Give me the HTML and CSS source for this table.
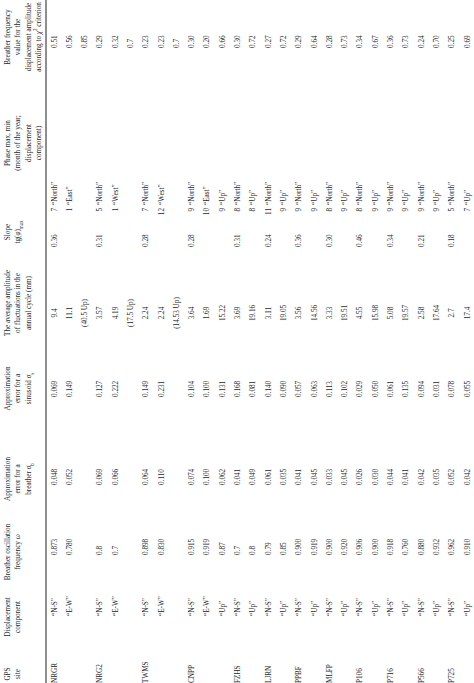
FILE: index.html
```html
<!DOCTYPE html>
<html lang="en">
<head>
<meta charset="utf-8">
<title>Breather table</title>
<link rel="stylesheet" href="styles.css">
</head>
<body>
<div class="sheet">
  <div class="head">
    <div><span>GPS<br>site</span></div>
    <div><span>Displacement<br>component</span></div>
    <div><span>Breather oscillation<br>frequency <i>ω</i></span></div>
    <div><span>Approximation<br>error for a<br>breather <i>σ</i><sub>b</sub></span></div>
    <div><span>Approximation<br>error for a<br>sinusoid <i>σ</i><sub>s</sub></span></div>
    <div><span>The average amplitude<br>of fluctuations in the<br>annual cycle (mm)</span></div>
    <div><span>Slope<br>tg(<i>φ</i>)<sub>max</sub></span></div>
    <div><span>Phase max, min<br>(month of the year;<br>displacement<br>component)</span></div>
    <div><span>Breather frequency<br>value for the<br>displacement amplitude<br>according to <i>χ</i><sup>2</sup> criterion</span></div>
  </div>
  <div class="rule"></div>
  <div class="body">
    <div class="row"><span class="c1">NRGR</span><span class="c2">“N-S”</span><span class="c3">0.873</span><span class="c4">0.048</span><span class="c5">0.069</span><span class="c6">9.4</span><span class="c7">0.36</span><span class="c8"><span class="n">7</span>“North”</span><span class="c9">0.51</span></div>
    <div class="row"><span class="c1"></span><span class="c2">“E-W”</span><span class="c3">0.780</span><span class="c4">0.052</span><span class="c5">0.149</span><span class="c6">11.1</span><span class="c7"></span><span class="c8"><span class="n">1</span>“East”</span><span class="c9">0.56</span></div>
    <div class="row"><span class="c1"></span><span class="c2"></span><span class="c3"></span><span class="c4"></span><span class="c5"></span><span class="c6">(40.5 Up)</span><span class="c7"></span><span class="c8"></span><span class="c9">0.85</span></div>
    <div class="row"><span class="c1">NRG2</span><span class="c2">“N-S”</span><span class="c3">0.8</span><span class="c4">0.069</span><span class="c5">0.127</span><span class="c6">3.57</span><span class="c7">0.31</span><span class="c8"><span class="n">5</span>“North”</span><span class="c9">0.29</span></div>
    <div class="row"><span class="c1"></span><span class="c2">“E-W”</span><span class="c3">0.7</span><span class="c4">0.066</span><span class="c5">0.222</span><span class="c6">4.19</span><span class="c7"></span><span class="c8"><span class="n">1</span>“West”</span><span class="c9">0.32</span></div>
    <div class="row"><span class="c1"></span><span class="c2"></span><span class="c3"></span><span class="c4"></span><span class="c5"></span><span class="c6">(17.5 Up)</span><span class="c7"></span><span class="c8"></span><span class="c9">0.7</span></div>
    <div class="row"><span class="c1">TWMS</span><span class="c2">“N-S”</span><span class="c3">0.898</span><span class="c4">0.064</span><span class="c5">0.149</span><span class="c6">2.24</span><span class="c7">0.28</span><span class="c8"><span class="n">7</span>“North”</span><span class="c9">0.23</span></div>
    <div class="row"><span class="c1"></span><span class="c2">“E-W”</span><span class="c3">0.830</span><span class="c4">0.110</span><span class="c5">0.231</span><span class="c6">2.24</span><span class="c7"></span><span class="c8"><span class="n">12</span>“West”</span><span class="c9">0.23</span></div>
    <div class="row"><span class="c1"></span><span class="c2"></span><span class="c3"></span><span class="c4"></span><span class="c5"></span><span class="c6">(14.53 Up)</span><span class="c7"></span><span class="c8"></span><span class="c9">0.7</span></div>
    <div class="row"><span class="c1">CNPP</span><span class="c2">“N-S”</span><span class="c3">0.915</span><span class="c4">0.074</span><span class="c5">0.104</span><span class="c6">3.64</span><span class="c7">0.28</span><span class="c8"><span class="n">9</span>“North”</span><span class="c9">0.30</span></div>
    <div class="row"><span class="c1"></span><span class="c2">“E-W”</span><span class="c3">0.919</span><span class="c4">0.100</span><span class="c5">0.100</span><span class="c6">1.69</span><span class="c7"></span><span class="c8"><span class="n">10</span>“East”</span><span class="c9">0.20</span></div>
    <div class="row"><span class="c1"></span><span class="c2">“Up”</span><span class="c3">0.87</span><span class="c4">0.062</span><span class="c5">0.131</span><span class="c6">15.22</span><span class="c7"></span><span class="c8"><span class="n">9</span>“Up”</span><span class="c9">0.66</span></div>
    <div class="row"><span class="c1">FZHS</span><span class="c2">“N-S”</span><span class="c3">0.7</span><span class="c4">0.041</span><span class="c5">0.168</span><span class="c6">3.69</span><span class="c7">0.31</span><span class="c8"><span class="n">8</span>“North”</span><span class="c9">0.30</span></div>
    <div class="row"><span class="c1"></span><span class="c2">“Up”</span><span class="c3">0.8</span><span class="c4">0.049</span><span class="c5">0.081</span><span class="c6">19.16</span><span class="c7"></span><span class="c8"><span class="n">8</span>“Up”</span><span class="c9">0.72</span></div>
    <div class="row"><span class="c1">LJRN</span><span class="c2">“N-S”</span><span class="c3">0.79</span><span class="c4">0.061</span><span class="c5">0.140</span><span class="c6">3.11</span><span class="c7">0.24</span><span class="c8"><span class="n">11</span>“North”</span><span class="c9">0.27</span></div>
    <div class="row"><span class="c1"></span><span class="c2">“Up”</span><span class="c3">0.85</span><span class="c4">0.035</span><span class="c5">0.090</span><span class="c6">19.05</span><span class="c7"></span><span class="c8"><span class="n">9</span>“Up”</span><span class="c9">0.72</span></div>
    <div class="row"><span class="c1">PPBF</span><span class="c2">“N-S”</span><span class="c3">0.900</span><span class="c4">0.041</span><span class="c5">0.057</span><span class="c6">3.56</span><span class="c7">0.36</span><span class="c8"><span class="n">9</span>“North”</span><span class="c9">0.29</span></div>
    <div class="row"><span class="c1"></span><span class="c2">“Up”</span><span class="c3">0.919</span><span class="c4">0.045</span><span class="c5">0.063</span><span class="c6">14.56</span><span class="c7"></span><span class="c8"><span class="n">9</span>“Up”</span><span class="c9">0.64</span></div>
    <div class="row"><span class="c1">MLFP</span><span class="c2">“N-S”</span><span class="c3">0.900</span><span class="c4">0.033</span><span class="c5">0.113</span><span class="c6">3.33</span><span class="c7">0.30</span><span class="c8"><span class="n">8</span>“North”</span><span class="c9">0.28</span></div>
    <div class="row"><span class="c1"></span><span class="c2">“Up”</span><span class="c3">0.920</span><span class="c4">0.045</span><span class="c5">0.102</span><span class="c6">19.51</span><span class="c7"></span><span class="c8"><span class="n">9</span>“Up”</span><span class="c9">0.73</span></div>
    <div class="row"><span class="c1">P106</span><span class="c2">“N-S”</span><span class="c3">0.906</span><span class="c4">0.026</span><span class="c5">0.029</span><span class="c6">4.55</span><span class="c7">0.46</span><span class="c8"><span class="n">8</span>“North”</span><span class="c9">0.34</span></div>
    <div class="row"><span class="c1"></span><span class="c2">“Up”</span><span class="c3">0.900</span><span class="c4">0.030</span><span class="c5">0.050</span><span class="c6">15.98</span><span class="c7"></span><span class="c8"><span class="n">9</span>“Up”</span><span class="c9">0.67</span></div>
    <div class="row"><span class="c1">P716</span><span class="c2">“N-S”</span><span class="c3">0.918</span><span class="c4">0.044</span><span class="c5">0.061</span><span class="c6">5.08</span><span class="c7">0.34</span><span class="c8"><span class="n">9</span>“North”</span><span class="c9">0.36</span></div>
    <div class="row"><span class="c1"></span><span class="c2">“Up”</span><span class="c3">0.760</span><span class="c4">0.041</span><span class="c5">0.135</span><span class="c6">19.57</span><span class="c7"></span><span class="c8"><span class="n">9</span>“Up”</span><span class="c9">0.73</span></div>
    <div class="row"><span class="c1">P566</span><span class="c2">“N-S”</span><span class="c3">0.880</span><span class="c4">0.042</span><span class="c5">0.094</span><span class="c6">2.58</span><span class="c7">0.21</span><span class="c8"><span class="n">9</span>“North”</span><span class="c9">0.24</span></div>
    <div class="row"><span class="c1"></span><span class="c2">“Up”</span><span class="c3">0.932</span><span class="c4">0.035</span><span class="c5">0.031</span><span class="c6">17.64</span><span class="c7"></span><span class="c8"><span class="n">9</span>“Up”</span><span class="c9">0.70</span></div>
    <div class="row"><span class="c1">P725</span><span class="c2">“N-S”</span><span class="c3">0.962</span><span class="c4">0.052</span><span class="c5">0.078</span><span class="c6">2.7</span><span class="c7">0.18</span><span class="c8"><span class="n">5</span>“North”</span><span class="c9">0.25</span></div>
    <div class="row"><span class="c1"></span><span class="c2">“Up”</span><span class="c3">0.910</span><span class="c4">0.042</span><span class="c5">0.055</span><span class="c6">17.4</span><span class="c7"></span><span class="c8"><span class="n">7</span>“Up”</span><span class="c9">0.69</span></div>
  </div>
</div>
</body>
</html>
```
FILE: styles.css
```css
html, body {
  margin: 0;
  padding: 0;
  background: #ffffff;
}
body {
  width: 474px;
  height: 683px;
  overflow: hidden;
  font-family: "Liberation Serif", "Times New Roman", serif;
  color: #1e1e1e;
}
.sheet {
  width: 853.75px;
  height: 474px;
  overflow: hidden;
  font-size: 9px;
  transform-origin: 0 0;
  transform: rotate(-90deg) translateX(-683px) scaleX(0.8);
}
.head {
  display: grid;
  grid-template-columns: 22.5px 120px 42.5px 140px 86.25px 127.5px 50px 172.5px 92.5px;
  height: 44.5px;
  box-sizing: border-box;
  padding-top: 2px;
  line-height: 10.3px;
  white-space: nowrap;
}
.head > div {
  display: flex;
  justify-content: center;
  text-align: center;
}
.head sub, .head sup {
  font-size: 70%;
  line-height: 0;
}
.rule {
  height: 2px;
  background: #8e8e8e;
}
.row {
  display: grid;
  grid-template-columns: 50px 75px 87.5px 106.25px 93.75px 100px 56.25px 193.75px 91.25px;
  height: 15.3px;
  line-height: 15.3px;
  white-space: nowrap;
}
.c1 { padding-left: 0; }
.c2 { padding-left: 33.75px; }
.c3 { padding-left: 35px; }
.c4 { padding-left: 35px; }
.c5 { padding-left: 38.75px; }
.c6 { text-align: center; }
.c7 { padding-left: 32.5px; }
.c8 { padding-left: 10px; }
.c8 .n {
  display: inline-block;
  width: 15px;
  margin-right: 3.75px;
  text-align: right;
}
.c9 { padding-left: 31.25px; }
```
